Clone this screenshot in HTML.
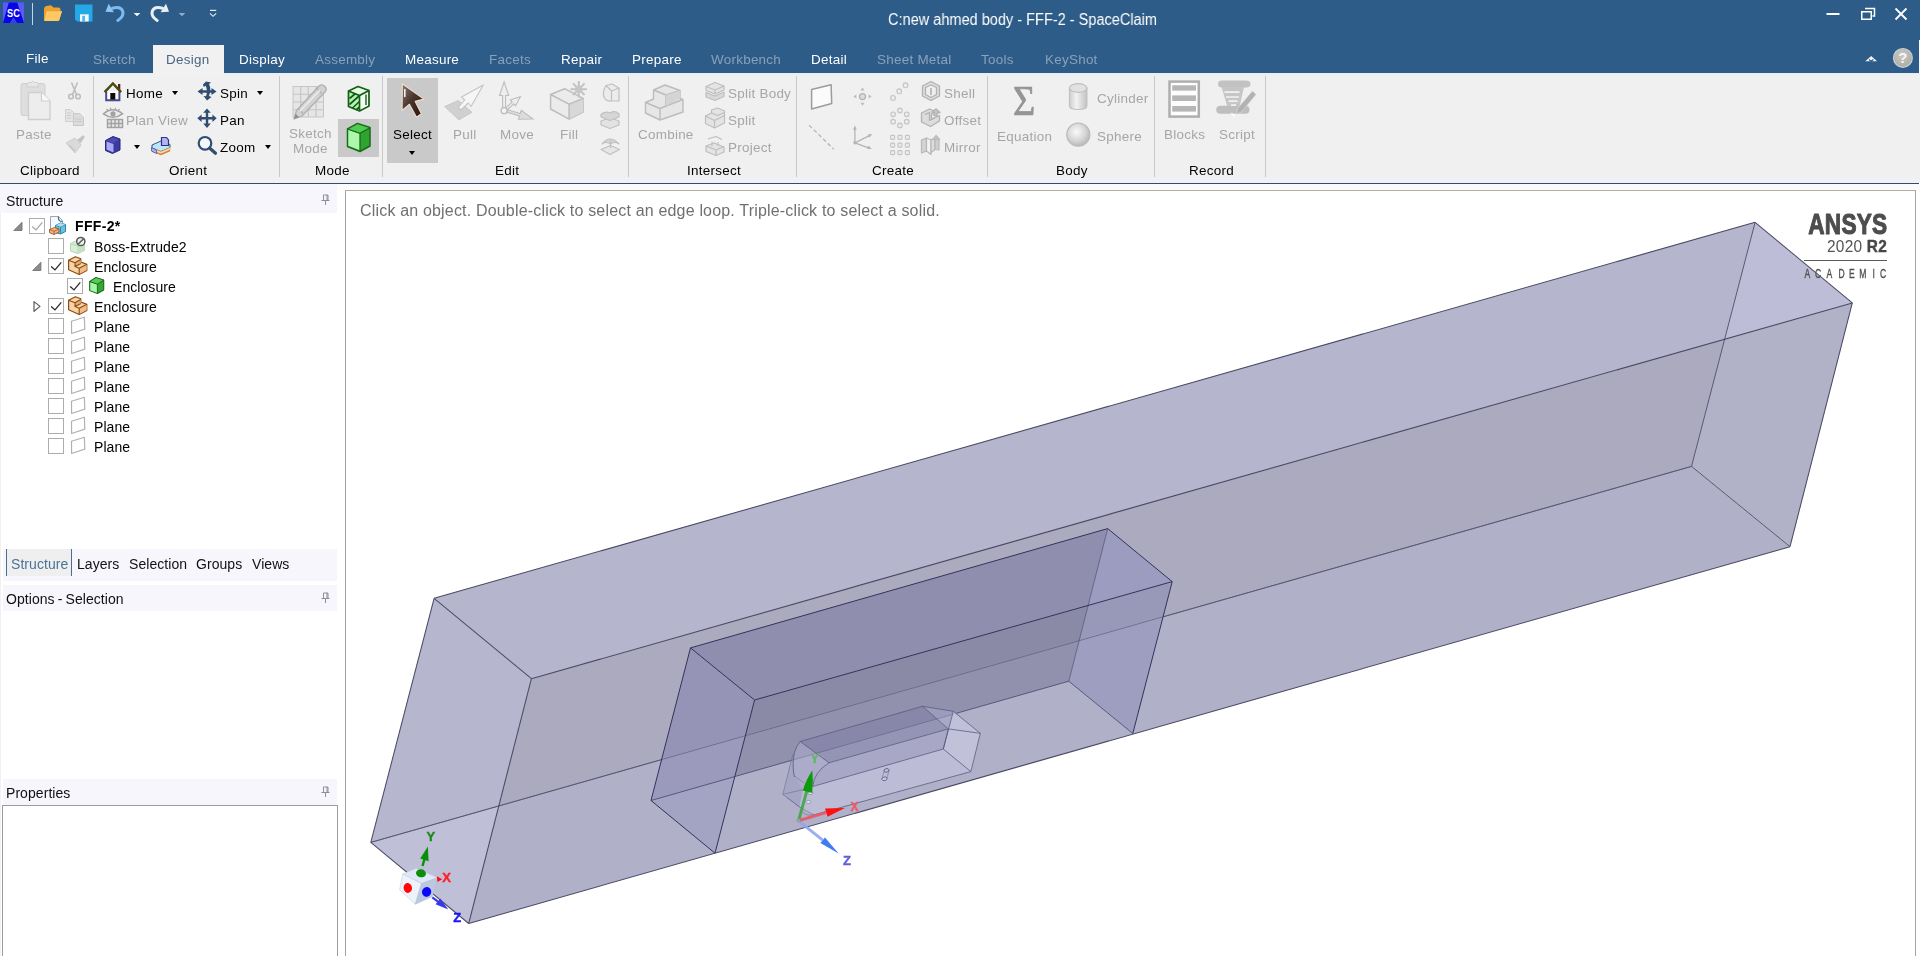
<!DOCTYPE html>
<html lang="en">
<head>
<meta charset="utf-8">
<title>C:new ahmed body - FFF-2 - SpaceClaim</title>
<style>
*{box-sizing:border-box;margin:0;padding:0}
html,body{width:1920px;height:956px;overflow:hidden;background:#fff}
body{position:relative;font-family:"Liberation Sans",Arial,sans-serif;font-size:13.45px;letter-spacing:0.26px;color:#000;-webkit-font-smoothing:antialiased}
.abs{position:absolute}
.rt,.gl,.tab{margin-top:1px}
.pt,.tr{font-size:14px;letter-spacing:0.06px}
.rt,.gl,.tab,.pt,.tr,#title{will-change:transform}
.t{position:absolute;white-space:nowrap;line-height:16px;height:16px}
#titlebar{position:absolute;left:0;top:0;width:1920px;height:73px;background:#2d5c88}
#title{letter-spacing:0;position:absolute;left:888px;top:8.5px;height:22px;line-height:22px;color:#fff;font-size:16px;white-space:nowrap;transform-origin:0 0;transform:scaleX(0.9085)}
.tab{position:absolute;top:51px;height:16px;line-height:16px;color:#fff;white-space:nowrap}
.tab.dis{color:#8ba1b9}
#tabsel{position:absolute;left:153px;top:45px;width:71px;height:29px;background:#f1f1f1}
#ribbon{position:absolute;left:0;top:73px;width:1920px;height:110px;background:#f0f0f0}
#ribtop{position:absolute;left:0;top:73px;width:1920px;height:3px;background:linear-gradient(#e4eef8,#f0f0f0)}
#ribbot{position:absolute;left:0;top:178px;width:1920px;height:5px;background:linear-gradient(#f0f0f0,#eef2fc)}
#ribline{position:absolute;left:0;top:183px;width:1919px;height:1px;background:#3d4a5e}
.sep{position:absolute;top:76px;width:1px;height:101px;background:#c9c9c9}
.gl{position:absolute;top:162px;height:16px;line-height:16px;white-space:nowrap;color:#000}
.rt{position:absolute;height:16px;line-height:16px;white-space:nowrap;color:#000}
.rt.d{color:#a6a6a6}
.hl{position:absolute;background:#c9c9c9}
.ic{position:absolute;overflow:visible}
.dd{position:absolute;width:0;height:0;border-left:3.5px solid transparent;border-right:3.5px solid transparent;border-top:4px solid #000}
#left{position:absolute;left:0;top:184px;width:345px;height:772px;background:#fff}
.ph{position:absolute;left:3px;width:334px;background:#f6f6fc}
.pt{position:absolute;left:6px;height:16px;line-height:16px;white-space:nowrap;color:#111}
.cb{position:absolute;width:16px;height:16px;border:1px solid #adadad;background:#fff}
.tr{position:absolute;height:16px;line-height:16px;white-space:nowrap;color:#000}
#view{position:absolute;left:345px;top:190px;width:1571px;height:766px;background:#fff;border-left:1px solid #a3a39c;border-top:1px solid #b1ad98;border-right:1px solid #a3a39c}
#hint{will-change:transform;position:absolute;left:359.600px;top:201px;height:20px;line-height:20px;font-size:16px;letter-spacing:0.178px;color:#707070;white-space:nowrap}
</style>
</head>
<body>
<div id="titlebar"></div>
<div class="abs" style="left:1919px;top:40px;width:1px;height:33px;background:#f4f8fc"></div>
<div id="title">C:new ahmed body - FFF-2 - SpaceClaim</div>
<!-- quick access toolbar -->
<svg class="ic" style="left:0;top:0" width="240" height="32" viewBox="0 0 240 32">
  <rect x="3" y="2.500" width="21" height="20.500" fill="#5a5af6"/>
  <path d="M8.800 2.500h8.400l6.800 20.500h-7l-3.500-5.500l-3.500 5.500h-7z" fill="#0606e6"/>
  <path d="M10.500 23l3-4.800l3 4.800z" fill="#3a3af0"/>
  <text x="6.900" y="17" font-family="Liberation Sans, sans-serif" font-weight="700" font-size="10.800" fill="#fff" textLength="13.200" lengthAdjust="spacingAndGlyphs">SC</text>
  <rect x="32" y="3" width="1" height="22" fill="#c5d3e3"/>
  <!-- folder -->
  <path d="M44 9q0-2.500 2.500-3l4.500-.8l2.500 2.300h5q2 0 2 2v2h-16.500z" fill="#f0a22e"/>
  <path d="M44 20v-10.500h13l1 1.500h4l-2.800 9q-.4 1-1.500 1h-12.200q-1.500 0-1.500-1z" fill="#e9a034"/>
  <path d="M46.500 11.200h15.500l-2.700 8.800q-.3 1-1.500 1h-13.500z" fill="#ffc862"/>
  <!-- save -->
  <path d="M75 4.500h17.500v17h-15.300l-2.200-2.200z" fill="#24a8e8"/>
  <rect x="80" y="14.300" width="8.700" height="7.200" fill="#f2f8fc"/>
  <rect x="82.300" y="15.800" width="2.600" height="5.700" fill="#49b4ea"/>
  <!-- undo -->
  <path d="M112.500 8.200q8.500-2.300 10.300 3.300q1.300 4.800-5 9" fill="none" stroke="#7dbaf2" stroke-width="3" stroke-linecap="round"/>
  <path d="M105.500 11.800l3.200-8l5.200 8.500z" fill="#8cc4f6"/>
  <path d="M133.700 13h6.600l-3.300 3.300z" fill="#fff"/>
  <!-- redo -->
  <path d="M162.500 8.200q-8.500-2.300-10.300 3.300q-1.300 4.800 5 9" fill="none" stroke="#e9eef4" stroke-width="3" stroke-linecap="round"/>
  <path d="M169 11.800l-3-8l-5.400 8.500z" fill="#e9eef4"/>
  <path d="M178.700 13h6.600l-3.300 3.300z" fill="#94aeca"/>
  <!-- customize -->
  <rect x="210" y="9.800" width="6.200" height="1.200" fill="#e4eaf1"/>
  <path d="M210 13.300l3.100 3l3.100-3" fill="none" stroke="#e4eaf1" stroke-width="1.100"/>
</svg>
<!-- window controls -->
<svg class="ic" style="left:1810px;top:0" width="110" height="73" viewBox="0 0 110 73">
  <rect x="16.500" y="13" width="13" height="2" fill="#fff"/>
  <path d="M55 8.500h9.500v7.500h-2" fill="none" stroke="#fff" stroke-width="1.500"/>
  <rect x="51.750" y="11.750" width="9.500" height="7.500" fill="#2d5c88" stroke="#fff" stroke-width="1.500"/>
  <path d="M85.500 8.500l11 11M96.500 8.500l-11 11" stroke="#fff" stroke-width="1.800" fill="none"/>
  <path d="M55.300 61.200l5.900-5.200l5.900 5.200z" fill="#f4f4f4"/>
  <path d="M59 59.500l2.200 1.700l2.200-1.700" fill="none" stroke="#2d5c88" stroke-width="1.200"/>
  <defs><radialGradient id="hg" cx=".45" cy=".35" r=".7"><stop offset="0" stop-color="#cfcbc4"/><stop offset=".6" stop-color="#b9b6b0"/><stop offset="1" stop-color="#a9a9a9"/></radialGradient></defs>
  <circle cx="92.900" cy="57.900" r="9.400" fill="url(#hg)" stroke="#c4cfda" stroke-width="1.200"/>
  <text x="92.900" y="63.200" font-family="Liberation Sans, sans-serif" font-weight="700" font-size="15" fill="#f6f6f6" text-anchor="middle">?</text>
</svg>
<!-- tabs -->
<div id="tabsel"></div>
<div class="tab" style="left:26px;top:50px">File</div>
<div class="tab dis" style="left:93px">Sketch</div>
<div class="tab" style="left:166px;color:#4a6685">Design</div>
<div class="tab" style="left:239px">Display</div>
<div class="tab dis" style="left:315px">Assembly</div>
<div class="tab" style="left:405px">Measure</div>
<div class="tab dis" style="left:489px">Facets</div>
<div class="tab" style="left:561px">Repair</div>
<div class="tab" style="left:632px">Prepare</div>
<div class="tab dis" style="left:711px">Workbench</div>
<div class="tab" style="left:811px">Detail</div>
<div class="tab dis" style="left:877px">Sheet Metal</div>
<div class="tab dis" style="left:981px">Tools</div>
<div class="tab dis" style="left:1045px">KeyShot</div>
<div id="ribbon"></div>
<div id="ribtop"></div>
<div id="tabsel2" class="abs" style="left:153px;top:72px;width:71px;height:4px;background:#f1f1f1"></div>
<div id="ribbot"></div>
<div id="ribline"></div>
<div class="sep" style="left:93px"></div>
<div class="sep" style="left:279px"></div>
<div class="sep" style="left:382px"></div>
<div class="sep" style="left:628px"></div>
<div class="sep" style="left:796px"></div>
<div class="sep" style="left:987px"></div>
<div class="sep" style="left:1154px"></div>
<div class="sep" style="left:1265px"></div>
<div class="hl" style="left:338px;top:119px;width:41px;height:38px"></div>
<div class="hl" style="left:387px;top:78px;width:51px;height:85px"></div>
<!-- group labels -->
<div class="gl" style="left:20px">Clipboard</div>
<div class="gl" style="left:169px">Orient</div>
<div class="gl" style="left:315px">Mode</div>
<div class="gl" style="left:495px">Edit</div>
<div class="gl" style="left:687px">Intersect</div>
<div class="gl" style="left:872px">Create</div>
<div class="gl" style="left:1056px">Body</div>
<div class="gl" style="left:1189px">Record</div>
<!-- texts -->
<div class="rt d" style="left:16px;top:126px">Paste</div>
<div class="rt" style="left:126px;top:85px">Home</div><div class="dd" style="left:172px;top:91px"></div>
<div class="rt d" style="left:126px;top:112px">Plan View</div>
<div class="dd" style="left:134px;top:145px"></div>
<div class="rt" style="left:220px;top:85px">Spin</div><div class="dd" style="left:257px;top:91px"></div>
<div class="rt" style="left:220px;top:112px">Pan</div>
<div class="rt" style="left:220px;top:139px">Zoom</div><div class="dd" style="left:265px;top:145px"></div>
<div class="rt d" style="left:289px;top:125px">Sketch</div>
<div class="rt d" style="left:293px;top:140px">Mode</div>
<div class="rt" style="left:393px;top:126px">Select</div><div class="dd" style="left:409px;top:151px"></div>
<div class="rt d" style="left:453px;top:126px">Pull</div>
<div class="rt d" style="left:500px;top:126px">Move</div>
<div class="rt d" style="left:560px;top:126px">Fill</div>
<div class="rt d" style="left:638px;top:126px">Combine</div>
<div class="rt d" style="left:728px;top:85px">Split Body</div>
<div class="rt d" style="left:728px;top:112px">Split</div>
<div class="rt d" style="left:728px;top:139px">Project</div>
<div class="rt d" style="left:944px;top:85px">Shell</div>
<div class="rt d" style="left:944px;top:112px">Offset</div>
<div class="rt d" style="left:944px;top:139px">Mirror</div>
<div class="rt d" style="left:997px;top:128px">Equation</div>
<div class="rt d" style="left:1097px;top:90px">Cylinder</div>
<div class="rt d" style="left:1097px;top:128px">Sphere</div>
<div class="rt d" style="left:1164px;top:126px">Blocks</div>
<div class="rt d" style="left:1219px;top:126px">Script</div>
<svg class="ic" style="left:0;top:73px" width="1920" height="110" viewBox="0 73 1920 110" font-family="Liberation Sans, sans-serif">
<defs>
<linearGradient id="gd" x1="0" y1="0" x2="1" y2="1"><stop offset="0" stop-color="#f4f4f4"/><stop offset="1" stop-color="#d2d2d2"/></linearGradient>
<linearGradient id="gsel" x1="0" y1="0" x2="1" y2="1"><stop offset="0" stop-color="#8a7a74"/><stop offset=".45" stop-color="#4a3630"/><stop offset="1" stop-color="#2a1008"/></linearGradient>
<radialGradient id="gsph" cx=".42" cy=".38" r=".65"><stop offset="0" stop-color="#fafafa"/><stop offset=".6" stop-color="#d6d6d6"/><stop offset="1" stop-color="#b4b4b4"/></radialGradient>
<linearGradient id="gcyl" x1="0" y1="0" x2="1" y2="0"><stop offset="0" stop-color="#cfcfcf"/><stop offset=".4" stop-color="#f2f2f2"/><stop offset="1" stop-color="#c2c2c2"/></linearGradient>
</defs>
<!-- ===== Clipboard ===== -->
<g id="i-paste">
<rect x="21" y="83.500" width="24" height="32" rx="2" fill="#dedede" stroke="#cfcfcf" stroke-width="1"/>
<path d="M27 84.500q0-2 2-2h2q1.500-2.500 3.500 0h2q2 0 2 2v2.500h-11.500z" fill="#e6e6e6" stroke="#cfcfcf" stroke-width="1"/>
<path d="M28.500 92.500h13l8.500 8.500v18.500h-21.500z" fill="#ededed" stroke="#cfcfcf" stroke-width="1.400"/>
<path d="M41.500 92.500v8.500h8.500" fill="#f8f8f8" stroke="#cfcfcf" stroke-width="1.200"/>
</g>
<g id="i-cut" fill="none" stroke="#bdbdbd" stroke-width="1.600">
<path d="M71.500 82.500l5 12M77.500 82.500l-5 12"/>
<circle cx="71" cy="96.500" r="2.300"/><circle cx="78" cy="96.500" r="2.300"/>
</g>
<g id="i-copy">
<path d="M65.500 109.500h5l3 3v9h-8z" fill="#e4e4e4" stroke="#cfcfcf"/>
<path d="M73.500 113.500h6l4 4v8h-10z" fill="#dcdcdc" stroke="#c8c8c8"/>
<path d="M75 119h7M75 121.500h7M67 113h4M67 115.500h4M67 118h4" stroke="#c4c4c4" stroke-width=".8"/>
</g>
<g id="i-brush">
<path d="M66 143l9-5l6 7l-6 8z" fill="#dadada" stroke="#cccccc"/>
<path d="M77 140l5.500-4.500q2.500-.5 2 2l-4 6z" fill="#c4c4c4"/>
<path d="M69 145l6 6" stroke="#c6c6c6" stroke-width="1.500"/>
</g>
<!-- ===== Orient ===== -->
<g id="i-home">
<rect x="106" y="91" width="13.500" height="9.300" fill="#fdfdfd"/>
<path d="M106.200 91.500v8.800h13.200v-8.800" fill="none" stroke="#4a4a96" stroke-width="2"/>
<rect x="110.300" y="93" width="5" height="6.600" fill="#0c0c0c"/>
<rect x="118" y="84" width="2.300" height="6.500" fill="#5a2410"/>
<path d="M104.600 92.200l8.300-8.700l8.200 8.700" fill="none" stroke="#4a4a10" stroke-width="2.500" stroke-linejoin="miter"/>
</g>
<g id="i-plan" fill="none" stroke="#a2a2a2">
<path d="M103.500 113.800q9.500-8 19 0q-9.500 7-19 0z" fill="#ececec" stroke-width="1.500"/>
<circle cx="113" cy="113.800" r="2.600" fill="#a2a2a2" stroke="none"/>
<path d="M106.500 109l1.500 1.500M110.300 107.800l.7 1.800M115.700 107.800l-.7 1.800M119.500 109l-1.500 1.500" stroke-width="1.100"/>
<rect x="107.500" y="119.500" width="15" height="8" fill="#e6e6e6" stroke-width="1.500"/>
<path d="M107.500 123.500h15M111.200 119.500v8M115 119.500v8M118.800 119.500v8" stroke-width="1.400"/>
</g>
<g id="i-cube">
<path d="M105.500 140.500l7.500-4l7 2.500v11l-7.500 3.500l-7-3z" fill="#3a3aa0" stroke="#24247c" stroke-width="1" stroke-linejoin="round"/>
<path d="M106.500 141.500l7 2.500v8.500l-7-3z" fill="#a9a8f2"/>
<path d="M106.500 140.800l6.500-3.300l6 2.200l-5.800 3.200z" fill="#4c4cb4"/>
</g>
<g id="i-stack">
<path d="M152 145l9-4l9 3.500v3l-9 4l-9-3.500z" fill="#bfe6f8" stroke="#2c5a78" stroke-width="1"/>
<path d="M152 148l9 3.500l9-4v3l-9 4l-9-3.500z" fill="#f3dca8" stroke="#c8a860" stroke-width=".6"/>
<path d="M152 151l9 3.500l9-4" fill="none" stroke="#e08040" stroke-width="1.400"/>
<path d="M161.500 137.500h5l2 2.500v5.500h-7z" fill="#b4b4f0" stroke="#303090" stroke-width="1.200"/>
<path d="M151.500 147.500l5 2.500v3.500l-5-2.500z" fill="#b0b0ee" stroke="#5050b0" stroke-width=".8"/>
</g>
<g id="i-spin" fill="#2f4e70">
<path d="M197.500 91.500l5-3.500v2.300h9v-2.300l5 3.500l-5 3.500v-2.300h-9v2.300z"/>
<path d="M203 84.500l3-3l5 1l-2 1.500q2.500 5 0 12l2.500 1l-4.500 3.500l-3.500-4.500l2.500.2q2-5.500-.3-10.500l-2 1.300z"/>
</g>
<g id="i-pan" fill="#2f4e70">
<path d="M207 108.500l3.800 4.300h-2.600v4.200h4.200v-2.600l4.300 3.800l-4.300 3.800v-2.600h-4.200v4.200h2.600l-3.800 4.300l-3.800-4.300h2.600v-4.200h-4.200v2.600l-4.300-3.800l4.300-3.800v2.600h4.200v-4.200h-2.600z"/>
</g>
<g id="i-zoom">
<circle cx="205" cy="143.300" r="6.300" fill="#f4f8fc" stroke="#2f4e70" stroke-width="2.200"/>
<path d="M209.800 148.200l5.700 5" stroke="#2f4e70" stroke-width="3.200" stroke-linecap="round"/>
</g>
<!-- ===== Mode ===== -->
<g id="i-sketch">
<rect x="293" y="86.500" width="30.500" height="30.500" fill="#e6e6e6" stroke="#c6c6c6"/>
<path d="M293 94.300h30.500M293 102h30.500M293 109.700h30.500M300.700 86.500v30.500M308.300 86.500v30.500M316 86.500v30.500" stroke="#c4c4c4" stroke-width="1.100"/>
<path d="M294 119l2.500-8.500l22.500-24.500q3-2.500 6 .5q2.500 3 0 5.500l-23 24z" fill="#d2d2d2" stroke="#b0b0b0" stroke-width="1.300" stroke-linejoin="round"/>
<path d="M294 119l1.600-5.300l3.600 3.600z" fill="#909090"/>
<path d="M298.500 109l4.500 4.500M317 88.500l5 5" stroke="#b0b0b0" stroke-width="1.100"/>
<path d="M299.500 111.500l20.500-21.500" stroke="#ececec" stroke-width="1.600"/>
</g>
<g id="i-wire">
<path d="M348.500 91l9.500-4.500l11 4v15.500l-9.500 5l-11-4.500z" fill="#b6f5b6" stroke="#165c16" stroke-width="1.700" stroke-linejoin="round"/>
<path d="M350 91.500l8-3.800l9 3.200l-7.700 3.600z" fill="#e4fbe4"/>
<path d="M360.500 95.500l7.500-3.500v13.500l-7.500 4z" fill="#f2fdf2"/>
<path d="M348.500 91l11 4.500l9.500-5M359.500 95.500v15.500" fill="none" stroke="#165c16" stroke-width="1.600"/>
<path d="M349.500 98.500l6-5M349.500 104.500l9.500-8.500M352.500 108l7-6.500M356.500 109.500l3-2.500" stroke="#165c16" stroke-width="1.700"/>
<path d="M366 94.500v10.500" stroke="#165c16" stroke-width="1.400"/>
</g>
<g id="i-solid">
<path d="M347.500 129l10-5.500l12.500 4v18.500l-10 5.500l-12.500-5z" fill="#2fa42f" stroke="#1a6a1a" stroke-width="1.500" stroke-linejoin="round"/>
<path d="M348.300 129.300l9.300-5l11.500 3.800l-9.300 5.200z" fill="#4fcb4f"/>
<path d="M348.300 129.800l11.500 4v16.500l-11.500-4.500z" fill="#adf8ad"/>
<path d="M347.500 129l12.500 4.300l10-5.600M360 133.300v18" fill="none" stroke="#1a6a1a" stroke-width="1.200"/>
</g>
<!-- ===== Edit ===== -->
<g id="i-select">
<path d="M402.300 83.800l21.500 15.300l-8.600 2.300l6.200 12.400l-5 3.300l-7-12.900l-7.300 6.300z" fill="url(#gsel)" stroke="#f4dcc8" stroke-width="1.100" stroke-linejoin="round"/>
<path d="M404.800 89.500v7" stroke="#fff" stroke-width="1.600" stroke-linecap="round" opacity=".9"/>
</g>
<g id="i-pull">
<path d="M444.700 106.600l13.700-6.100l13.600 11.800l-13.100 7.500z" fill="#d0d0d0" stroke="#c6c6c6"/>
<path d="M483.300 84.900l-12.300 21.600l-2.700-3.500l-7.300 7l-2.800-2.500l6.500-7.500l-3.200-2.900z" fill="#f6f6f6" stroke="#c4c4c4" stroke-width="1.100" stroke-linejoin="round"/>
</g>
<g id="i-move" fill="#eeeeee" stroke="#bdbdbd" stroke-width="1.100">
<path d="M504.100 82l4.600 13.500h-3.100v12h-3v-12h-3.100z"/>
<path d="M520.300 96.800l-4.700 9l-1.800-2l-6.800 6.200l-1.500-1.800l6.700-6.200l-1.900-2z"/>
<path d="M533 119l-14.500.2l1-3.200l-12.500-3.700l.8-2.500l12.500 3.700l1-3.100z" fill="#dcdcdc"/>
<circle cx="504.100" cy="110.700" r="3" fill="#f4f4f4" stroke-width="1.300"/>
</g>
<g id="i-fill">
<path d="M550.600 94.500l14.100-5.800l18.400 9.700v13.600l-14 7.100l-18.500-10.100z" fill="#ebebeb" stroke="#bdbdbd" stroke-width="1.500" stroke-linejoin="round"/>
<path d="M569.100 104.100l14-5.700v13.600l-14 7.100z" fill="#d8d8d8"/>
<path d="M550.600 94.500l18.500 9.600l14-5.700M569.100 104.100v15" fill="none" stroke="#bdbdbd" stroke-width="1.500"/>
<g stroke="#c2c2c2" stroke-width="2"><path d="M578.800 81v16.500M570.500 89.200h16.500M573 83.400l11.600 11.600M584.600 83.400l-11.600 11.600"/></g>
<circle cx="578.800" cy="89.200" r="3.800" fill="#c6c6c6"/>
</g>
<g id="i-e1" fill="#ececec" stroke="#c0c0c0" stroke-width="1.200" stroke-linejoin="round">
<path d="M606 85.500l6-1.500l7 4v13h-7.500q-5 .5-7-3q-3-5 1.500-12.500z"/>
<path d="M606 85.500l5.500 5.500l7.500-3M611.500 91v10" fill="none"/>
</g>
<g id="i-e2" fill="#e2e2e2" stroke="#c0c0c0" stroke-width="1.200" stroke-linejoin="round">
<path d="M601 121l9-3.500l9 3.500v4l-9 3.500l-9-3.500z"/>
<path d="M601 114.500q4-4 9-1.500q5-3 9 1v3l-9 3.500l-9-3.500z" fill="#d6d6d6"/>
</g>
<g id="i-e3" fill="#e6e6e6" stroke="#c0c0c0" stroke-width="1.200" stroke-linejoin="round">
<path d="M601 149.500l9.500-4l9 4l-9.500 5z"/>
<path d="M602 144q8-10 17 0q-4-3-8.500 0q-4.500-3-8.500 0z" fill="#d4d4d4"/>
<path d="M610.500 141v7" fill="none"/>
</g>
<!-- ===== Intersect ===== -->
<g id="i-combine" stroke="#bcbcbc" stroke-width="1.400" stroke-linejoin="round">
<path d="M645.500 102.500l8-3.500v-9l11.500-5l15 5.500v8l3 1v12.500l-23 8l-14.500-7z" fill="#e6e6e6"/>
<path d="M653.500 90l12.500 5l14-4.500M666 95v11M645.500 102.500l14.500 6l6-2.500M660 108.500v11M660 108.500l6-2.500l17-6.500" fill="none"/>
<path d="M666 95l14-4.500v8l-14 7.500z" fill="#d4d4d4" stroke="none"/>
</g>
<g id="i-splitbody" fill="#e4e4e4" stroke="#bebebe" stroke-width="1.200" stroke-linejoin="round">
<path d="M706 86.500l9-4l9 3.500v4l-9 4l-9-3.500z"/>
<path d="M706 92.500l9 3.500l9-4v4.500l-9 4l-9-3.500z" fill="#d8d8d8"/>
<path d="M706 86.500l9 3.500l9-4M715 90v4" fill="none"/>
</g>
<g id="i-split" fill="#e4e4e4" stroke="#bebebe" stroke-width="1.200" stroke-linejoin="round">
<path d="M705.500 116l6-3v-3l6-2l7 3v12l-10 5l-9-4.500z"/>
<path d="M705.500 116l9 4.500l10-5M714.500 120.500v7.500M711.500 113l6 2.500l7-3" fill="none"/>
</g>
<g id="i-project" fill="#e4e4e4" stroke="#bebebe" stroke-width="1.200" stroke-linejoin="round">
<path d="M706 146l8-3l10 4v5l-8 3.500l-10-4z"/>
<path d="M706 146l10 4l8-3.500M716 150v5.500" fill="none"/>
<path d="M708 139l8-2.500l6 3" fill="none"/>
<path d="M712 141.500v5M718 142v4" fill="none" stroke-width="1"/>
</g>
<!-- ===== Create ===== -->
<path d="M811.600 89.500l19.500-4.700l.6 18.800l-20.100 5.300z" fill="#fbfbfb" stroke="#9c9c9c" stroke-width="1.500" stroke-linejoin="round"/>
<g id="i-point" fill="#bcbcbc">
<circle cx="862.500" cy="96.600" r="3" fill="#dcdcdc" stroke="#b4b4b4" stroke-width="1.300"/>
<path d="M862.500 87.500l2 3h-4zM862.500 105.700l2-3h-4zM853.400 96.600l3-2v4zM871.600 96.600l-3-2v4z"/>
</g>
<path d="M809.100 125.200l24.500 23.900" stroke="#bdbdbd" stroke-width="1.500" stroke-dasharray="4 2.500" fill="none"/>
<g id="i-axis" stroke="#b4b4b4" stroke-width="1.300" fill="#b4b4b4">
<path d="M854.900 142.800v-14M854.900 142.800l14-7M854.900 142.800l13.500 5" fill="none"/>
<path d="M854.900 125.200l1.800 4.500h-3.600zM872.500 134l-3.200 3.600l-1.600-3.200zM871.900 149.100l-4.800-.2l1.200-3.400z" stroke="none"/>
<circle cx="854.900" cy="142.800" r="1.600" stroke="none"/>
</g>
<g id="i-pat" fill="#ececec" stroke="#c4c4c4" stroke-width="1.100">
<circle cx="893" cy="97.900" r="2.400"/><circle cx="899.200" cy="91.300" r="2.400"/><circle cx="905.500" cy="85.300" r="2.400"/>
<circle cx="899.900" cy="110.400" r="2.300"/><circle cx="906.700" cy="114.300" r="2.300"/><circle cx="906.700" cy="121.700" r="2.300"/><circle cx="899.900" cy="125.400" r="2.300"/><circle cx="893.100" cy="121.700" r="2.300"/><circle cx="893.100" cy="114.300" r="2.300"/>
<rect x="890.600" y="135.400" width="4" height="4" rx=".8"/><rect x="897.900" y="135.400" width="4" height="4" rx=".8"/><rect x="905.400" y="135.400" width="4" height="4" rx=".8"/>
<rect x="890.600" y="143.100" width="4" height="4" rx=".8"/><rect x="897.900" y="143.100" width="4" height="4" rx=".8"/><rect x="905.400" y="143.100" width="4" height="4" rx=".8"/>
<rect x="890.600" y="150.600" width="4" height="4" rx=".8"/><rect x="897.900" y="150.600" width="4" height="4" rx=".8"/><rect x="905.400" y="150.600" width="4" height="4" rx=".8"/>
</g>
<g id="i-shell" fill="#dcdcdc" stroke="#b2b2b2" stroke-width="1.300" stroke-linejoin="round">
<path d="M922.500 86l8.500-4.500l8.500 4.500v10l-8.500 4.500l-8.500-4.500z"/>
<path d="M925.500 87.500l5.500-2.500l5.500 2.500v7l-5.500 3l-5.500-3z" fill="#efefef"/>
<path d="M931 88v7" fill="none" stroke-width="1.600"/>
</g>
<g id="i-offset" fill="#dcdcdc" stroke="#b2b2b2" stroke-width="1.300" stroke-linejoin="round">
<path d="M921.500 113l8-4l6 2.500l-4 2.500v5l8-3.500v5.500l-9 5.500l-9-4.500z"/>
<path d="M932 112l4-3l4 3.500l-2.500 .5l-1 3.500l-3-1.500l1-2.500z" fill="#c6c6c6"/>
<path d="M925 114.500l4.500-2v8l5-2.500" fill="none"/>
</g>
<g id="i-mirror" fill="#e4e4e4" stroke="#b8b8b8" stroke-width="1.200" stroke-linejoin="round">
<path d="M921.500 140l5-2v13l-5 2z" fill="#d4d4d4"/>
<path d="M926.500 138l4.500 2v14.500l-4.500-3.500z" fill="#f2f2f2"/>
<path d="M931 140l4-2.500v12l-4 3z" fill="#dcdcdc"/>
<path d="M935 137.500l4 2.500v10l-4-.5z" fill="#d0d0d0"/>
<path d="M933 139.500l3-4l3.500 4z" fill="#c6c6c6"/>
</g>
<!-- ===== Body ===== -->
<text x="1024.300" y="115.300" font-family="Liberation Serif, serif" font-size="42" fill="#949494" stroke="#949494" stroke-width=".7" text-anchor="middle" textLength="22.500" lengthAdjust="spacingAndGlyphs">&#931;</text>
<g id="i-cyl">
<path d="M1069.500 88v17.500q0 4 8.700 4q8.700 0 8.700-4v-17.500z" fill="url(#gcyl)" stroke="#c0c0c0" stroke-width="1.200"/>
<ellipse cx="1078.200" cy="88" rx="8.700" ry="4.300" fill="#e2e2e2" stroke="#c0c0c0" stroke-width="1.200"/>
</g>
<circle cx="1078.300" cy="134.700" r="11.500" fill="url(#gsph)" stroke="#bcbcbc" stroke-width="1.300"/>
<!-- ===== Record ===== -->
<g id="i-blocks">
<rect x="1169.500" y="81.600" width="29.300" height="35" fill="#fdfdfd" stroke="#aeaeae" stroke-width="2.500"/>
<rect x="1172.200" y="85.300" width="23.800" height="5.300" fill="#b6b6b6"/>
<rect x="1172.200" y="95.400" width="23.800" height="5.600" fill="#b6b6b6"/>
<rect x="1172.200" y="106" width="23.800" height="5.600" fill="#b6b6b6"/>
</g>
<g id="i-script">
<path d="M1222 80.400h24q4.500 0 4.500 3.600q0 3.500-4.500 3.500h-24q-4 0-4-3.500q0-3.600 4-3.600z" fill="#c2c2c2"/>
<path d="M1221.500 87h22.500l-4.500 20h-12z" fill="#c6c6c6"/>
<path d="M1220.500 105.800h25q4 0 4 4t-4 4h-25q-4.300 0-4.300-4t4.300-4z" fill="#bebebe"/>
<path d="M1224.500 92.200h15M1226 97h13M1228.500 101.200h9M1231 105.200h5" stroke="#f2f2f2" stroke-width="1.700"/>
<path d="M1252.500 91l3.500 3.500l-14.500 17.500l-5 2l1-5.500z" fill="#b2b2b2" stroke="#d8d8d8" stroke-width=".7"/>
<path d="M1230.500 112.500l3 4.500l2.500-2z" fill="#fafafa"/>
</g>
</svg>
<div id="left"></div>
<div id="leftedge" class="abs" style="left:0;top:184px;width:1px;height:772px;background:#f1f1f1"></div>
<div class="abs" style="left:0;top:184px;width:1920px;height:6px;background:#fbfbfe"></div>
<div class="ph" style="left:0;width:337px;top:184px;height:29px"></div>
<div class="pt" style="top:193px">Structure</div>
<div class="ph" style="top:549px;height:32px"></div>
<div class="abs" style="left:6px;top:549px;width:66px;height:27px;background:#efefef;border-left:1px solid #4a6d98;border-right:1px solid #4a6d98"></div>
<div class="pt" style="left:11px;top:556px;color:#4a7397">Structure</div>
<div class="pt" style="left:77px;top:556px">Layers</div>
<div class="pt" style="left:129px;top:556px">Selection</div>
<div class="pt" style="left:196px;top:556px">Groups</div>
<div class="pt" style="left:252px;top:556px">Views</div>
<div class="ph" style="top:585px;height:26px"></div>
<div class="pt" style="top:591px;word-spacing:-0.9px">Options - Selection</div>
<div class="ph" style="top:779px;height:26px"></div>
<div class="pt" style="top:785px">Properties</div>
<div class="abs" style="left:2px;top:805px;width:336px;height:160px;border:1px solid #9c9c9c;background:#fff"></div>
<!-- pins -->
<svg class="ic" style="left:321px;top:194px" width="10" height="12" viewBox="0 0 10 12"><path d="M2.500 1h4.500v5.500M2.500 1v5.500M0.500 6.500h8M4.500 6.500v4.500M6 1v5.500" fill="none" stroke="#8e8e96" stroke-width="1"/></svg>
<svg class="ic" style="left:321px;top:592px" width="10" height="12" viewBox="0 0 10 12"><path d="M2.500 1h4.500v5.500M2.500 1v5.500M0.500 6.500h8M4.500 6.500v4.500M6 1v5.500" fill="none" stroke="#8e8e96" stroke-width="1"/></svg>
<svg class="ic" style="left:321px;top:786px" width="10" height="12" viewBox="0 0 10 12"><path d="M2.500 1h4.500v5.500M2.500 1v5.500M0.500 6.500h8M4.500 6.500v4.500M6 1v5.500" fill="none" stroke="#8e8e96" stroke-width="1"/></svg>
<!-- tree -->
<div class="cb" style="left:29px;top:218px"></div>
<div class="cb" style="left:48px;top:238px"></div>
<div class="cb" style="left:48px;top:258px"></div>
<div class="cb" style="left:67px;top:278px"></div>
<div class="cb" style="left:48px;top:298px"></div>
<div class="cb" style="left:48px;top:318px"></div>
<div class="cb" style="left:48px;top:338px"></div>
<div class="cb" style="left:48px;top:358px"></div>
<div class="cb" style="left:48px;top:378px"></div>
<div class="cb" style="left:48px;top:398px"></div>
<div class="cb" style="left:48px;top:418px"></div>
<div class="cb" style="left:48px;top:438px"></div>
<div class="tr" style="left:75px;top:218px;font-weight:700;letter-spacing:0.35px">FFF-2*</div>
<div class="tr" style="left:94px;top:239px">Boss-Extrude2</div>
<div class="tr" style="left:94px;top:259px">Enclosure</div>
<div class="tr" style="left:113px;top:279px">Enclosure</div>
<div class="tr" style="left:94px;top:299px">Enclosure</div>
<div class="tr" style="left:94px;top:319px">Plane</div>
<div class="tr" style="left:94px;top:339px">Plane</div>
<div class="tr" style="left:94px;top:359px">Plane</div>
<div class="tr" style="left:94px;top:379px">Plane</div>
<div class="tr" style="left:94px;top:399px">Plane</div>
<div class="tr" style="left:94px;top:419px">Plane</div>
<div class="tr" style="left:94px;top:439px">Plane</div>
<svg class="ic" style="left:0;top:212px" width="120" height="250" viewBox="0 212 120 250">
<path d="M13.800 230.500h8.200v-8.200z" fill="#8c8c8c" stroke="#6a6a6a" stroke-width=".8" stroke-linejoin="round"/>
<path d="M32.700 270.500h8.200v-8.200z" fill="#8c8c8c" stroke="#6a6a6a" stroke-width=".8" stroke-linejoin="round"/>
<path d="M34 301.600l6 4.800l-6 4.900z" fill="#fff" stroke="#5a5a5a" stroke-width="1.200" stroke-linejoin="round"/>
<path d="M32.2 226.4l3.800 3.500l6.300-7.500" fill="none" stroke="#a6a6a6" stroke-width="1.300"/>
<path d="M51.2 266.4l3.800 3.500l6.300-7.500" fill="none" stroke="#2a2a2a" stroke-width="1.300"/>
<path d="M70.2 286.4l3.800 3.500l6.300-7.500" fill="none" stroke="#2a2a2a" stroke-width="1.300"/>
<path d="M51.2 306.4l3.800 3.500l6.300-7.500" fill="none" stroke="#2a2a2a" stroke-width="1.300"/>
<g>
<path d="M50.500 216.500h8l4 4v9h-12z" fill="#f6f8fb" stroke="#9aa6b4" stroke-width="1"/>
<path d="M58.500 216.500v2.500q.5 2.500 4 2.500" fill="none" stroke="#3a6a9a" stroke-width="1.200"/>
<path d="M55.500 225.500l5-2.500l5 1.500v7l-5 2.500l-5-1.500z" fill="#6cc0dc" stroke="#2a84a8" stroke-width="1" stroke-linejoin="round"/>
<path d="M55.500 225.500l5 1.500l5-2.500M60.500 227v6.500" fill="none" stroke="#2a84a8" stroke-width=".9"/>
<path d="M56 225.300l4.700-2.200l4.500 1.400l-4.700 2.200z" fill="#a8e0f0"/>
<path d="M49.500 229.500l5-2l4.500 1.500v3l-5 2.500l-4.500-1.800z" fill="#f3b684" stroke="#a0581c" stroke-width=".9" stroke-linejoin="round"/>
<path d="M49.500 229.500l4.500 1.800l5-2.300M54 231.300v3.200" fill="none" stroke="#a0581c" stroke-width=".8"/>
</g>
<g>
<path d="M70.500 243.500l6.500-3l7.500 2.500v7.500l-6.500 3l-7.500-2.500z" fill="#d6efd6" stroke="#b4d8b4" stroke-width="1" stroke-linejoin="round"/>
<path d="M70.500 243.500l7.500 2.500l6.500-3M78 246v7.500" fill="none" stroke="#b4d8b4" stroke-width="1"/>
<path d="M78 246l6.500-3v7.500l-6.500 3z" fill="#c2e2c2"/>
<circle cx="80.800" cy="241.500" r="4.100" fill="#f2f2f2" stroke="#5a5a5a" stroke-width="1.500"/>
<path d="M78 244.300l5.600-5.600" stroke="#5a5a5a" stroke-width="1.500"/>
</g>
<g transform="translate(0 0)">
<path d="M68.600 260.300l6.800-3.600l5.400 2v3.400l6 2.200v6.200l-7.600 4l-10.600-4.800z" fill="#f7d3a6" stroke="#8c4a12" stroke-width="1.200" stroke-linejoin="round"/>
<path d="M75 262.800l5.800-3.200v3l-5.800 3.400z" fill="#e8b078"/>
<path d="M79.200 268l7.400-3.600v5.600l-7.400 4z" fill="#eebd8a"/>
<path d="M68.600 260.300l6.400 2.500v3.800l4.200 1.600v6.300M75 262.800l5.800-3.200M79.200 268.200l7.600-3.900M75 266.600l5.800-3.200" fill="none" stroke="#8c4a12" stroke-width="1.100" stroke-linejoin="round"/>
</g>
<g transform="translate(0 40)">
<path d="M68.600 260.300l6.800-3.600l5.400 2v3.400l6 2.200v6.200l-7.600 4l-10.600-4.800z" fill="#f7d3a6" stroke="#8c4a12" stroke-width="1.200" stroke-linejoin="round"/>
<path d="M75 262.800l5.800-3.200v3l-5.800 3.400z" fill="#e8b078"/>
<path d="M79.200 268l7.400-3.600v5.600l-7.400 4z" fill="#eebd8a"/>
<path d="M68.600 260.300l6.400 2.500v3.800l4.200 1.600v6.300M75 262.800l5.800-3.200M79.200 268.200l7.600-3.900M75 266.600l5.800-3.200" fill="none" stroke="#8c4a12" stroke-width="1.100" stroke-linejoin="round"/>
</g>
<g>
<path d="M89.700 281.500l6.300-4l7.700 2.500v10l-6.300 3.500l-7.700-3z" fill="#34a834" stroke="#1c6c1c" stroke-width="1.100" stroke-linejoin="round"/>
<path d="M90.300 281.700l5.800-3.600l7 2.300l-5.800 3.600z" fill="#56cc56"/>
<path d="M90.300 282.200l7 2.300v8.500l-7-2.700z" fill="#a8f4a8"/>
<path d="M89.700 281.500l7.700 2.700l6.300-4M97.400 284.200v9.300" fill="none" stroke="#1c6c1c" stroke-width="1"/>
</g>
<path d="M71.500 321.2l12.900-4l.4 11.900l-13.200 4.400z" fill="#fff" stroke="#b2b2b2" stroke-width="1.200" stroke-linejoin="round"/>
<path d="M71.500 341.2l12.900-4l.4 11.900l-13.200 4.400z" fill="#fff" stroke="#b2b2b2" stroke-width="1.200" stroke-linejoin="round"/>
<path d="M71.500 361.2l12.900-4l.4 11.900l-13.200 4.400z" fill="#fff" stroke="#b2b2b2" stroke-width="1.200" stroke-linejoin="round"/>
<path d="M71.500 381.2l12.900-4l.4 11.900l-13.200 4.400z" fill="#fff" stroke="#b2b2b2" stroke-width="1.200" stroke-linejoin="round"/>
<path d="M71.500 401.2l12.900-4l.4 11.900l-13.200 4.400z" fill="#fff" stroke="#b2b2b2" stroke-width="1.200" stroke-linejoin="round"/>
<path d="M71.500 421.2l12.900-4l.4 11.900l-13.200 4.400z" fill="#fff" stroke="#b2b2b2" stroke-width="1.200" stroke-linejoin="round"/>
<path d="M71.500 441.2l12.900-4l.4 11.900l-13.200 4.400z" fill="#fff" stroke="#b2b2b2" stroke-width="1.200" stroke-linejoin="round"/>
</svg>
<div id="view"></div>
<div id="hint">Click an object. Double-click to select an edge loop. Triple-click to select a solid.</div>
<svg class="ic" style="left:346px;top:191px;will-change:transform" width="1569" height="765" viewBox="346 191 1569 765" font-family="Liberation Sans, sans-serif">
<g shape-rendering="geometricPrecision">
<polygon points="434.1,598.3 1755.1,222.3 1724.6,339.2 531.4,678.7" fill="#b5b5cd" />
<polygon points="1755.1,222.3 1852.3,302.9 1724.6,339.2" fill="#bdbdd7" />
<polygon points="434.1,598.3 531.4,678.7 498.8,806.0 370.8,842.4" fill="#b6b6cf" />
<polygon points="370.8,842.4 498.8,806.0 468.7,923.5" fill="#bfbfd7" />
<polygon points="531.4,678.7 1724.6,339.2 1691.5,466.4 498.8,806.0" fill="#abaabe" />
<polygon points="1724.6,339.2 1852.3,302.9 1790.0,546.7 1691.5,466.4" fill="#b1b1c7" />
<polygon points="498.8,806.0 1691.5,466.4 1790.0,546.7 468.7,923.5" fill="#b0b0c8" />
<line x1="370.8" y1="842.4" x2="1691.5" y2="466.4" stroke="#565672" stroke-width="1" />
<line x1="1755.1" y1="222.3" x2="1691.5" y2="466.4" stroke="#565672" stroke-width="1" />
<line x1="1691.5" y1="466.4" x2="1790.0" y2="546.7" stroke="#565672" stroke-width="1" />
<polygon points="690.5,647.9 1107.7,528.6 1088.1,605.4 754.6,700.0" fill="#8f8eaf" />
<polygon points="1107.7,528.6 1172.2,581.6 1088.1,605.4" fill="#9c9cc0" />
<polygon points="690.5,647.9 754.6,700.0 745.4,735.8 661.6,759.6" fill="#9594b6" />
<polygon points="745.4,735.8 734.8,776.6 651.0,800.5 661.6,759.6" fill="#9b9abd" />
<polygon points="651.0,800.5 734.8,776.6 715.0,853.2" fill="#a3a3c4" />
<polygon points="754.6,700.0 1088.1,605.4 1079.1,640.7 745.4,735.8" fill="#8b8aa6" />
<polygon points="1079.1,640.7 1068.8,681.2 734.8,776.6 745.4,735.8" fill="#9190ad" />
<polygon points="1088.1,605.4 1172.2,581.6 1163.1,616.8 1079.1,640.7" fill="#9898b8" />
<polygon points="1163.1,616.8 1132.8,733.5 1068.8,681.2 1079.1,640.7" fill="#9e9ec0" />
<polygon points="734.8,776.6 1068.8,681.2 1132.8,733.5 715.0,853.2" fill="#b0b0c9" />
<line x1="370.8" y1="842.4" x2="1691.5" y2="466.4" stroke="#55557a" stroke-width="1" opacity="0.5"/>
<line x1="651.0" y1="800.5" x2="1068.8" y2="681.2" stroke="#44446c" stroke-width="1" opacity="0.8"/>
<line x1="1068.8" y1="681.2" x2="1132.8" y2="733.5" stroke="#44446c" stroke-width="1" opacity="0.8"/>
<line x1="1107.7" y1="528.6" x2="1068.8" y2="681.2" stroke="#44446c" stroke-width="1" opacity="0.6"/>
<path d="M800.2,741.5 L922.5,706.3 L948.3,728.9 L829,762.8 Z" fill="#8282a8" fill-opacity="0.6"/>
<path d="M922.5,706.3 L953.3,711.3 L980.3,733.3 L948.3,728.9 Z" fill="#a4a4c6" fill-opacity="0.6"/>
<path d="M953.3,711.3 L980.3,733.3 L970.9,771.6 L943.3,749 Z" fill="#c6c6df" fill-opacity="0.8"/>
<path d="M829,762.8 L948.3,728.9 L943.3,749 L812.7,786.5 Q814,772 829,762.8 Z" fill="#a4a4c4" fill-opacity="0.6"/>
<path d="M812.7,786.5 L943.3,749 L970.9,771.6 L813.9,814.9 L799.3,806.9 L803,790 Z" fill="#c0c0da" fill-opacity="0.75"/>
<path d="M800.2,741.5 Q792.5,750 793,768 L794.5,776 L803,790 L810,793 Q812,775 829,762.8 Z" fill="#aaaacb" fill-opacity="0.6"/>
<path d="M793,752 L782.8,794.4 L799.3,806.9 L803,790 L794.5,776 Z" fill="#9c9cc0" fill-opacity="0.55"/>
<path d="M800.2,741.5 L922.5,706.3 L953.3,711.3 L980.3,733.3 L970.9,771.6 L813.9,814.9 M922.5,706.3 L948.3,728.9 L829,762.8 L800.2,741.5 M948.3,728.9 L980.3,733.3 M948.3,728.9 L943.3,749 L953.3,711.3 M943.3,749 L970.9,771.6 M943.3,749 L812.7,786.5 M829,762.8 Q814,772 812.7,786.5 M800.2,741.5 Q792,751 793.2,768 Q793.6,774 794.5,777" stroke="#585880" stroke-width="0.9" fill="none" opacity="0.85"/>
<path d="M793,754 L782.8,794.4 L799.3,806.9 L813.9,814.9 M782.8,794.4 L802.9,789.6 M794.5,776 L804,783 M787,797.5 L802.5,809 M803,812 Q805.5,816.5 814,814.5" stroke="#585880" stroke-width="0.8" fill="none" opacity="0.55"/>
<path d="M884,771 L882,779.3 M889,770 L887,778.3" stroke="#585880" stroke-width="0.8" fill="none" opacity="0.55"/>
<ellipse cx="886.5" cy="770.4" rx="2.6" ry="1.8" transform="rotate(-15 886.5 770.4)" stroke="#585880" stroke-width="0.9" fill="none" opacity="0.85"/>
<ellipse cx="884.5" cy="778.8" rx="2.6" ry="1.8" transform="rotate(-15 884.5 778.8)" stroke="#585880" stroke-width="0.9" fill="#cfcfe4" opacity="0.85"/>
<ellipse cx="810.6" cy="793" rx="2.4" ry="1.6" transform="rotate(-15 810.6 793)" stroke="#8a8aa8" stroke-width="0.8" fill="#e6e6f2" opacity="0.9"/>
<ellipse cx="808.4" cy="802" rx="2.4" ry="1.6" transform="rotate(-15 808.4 802)" stroke="#8a8aa8" stroke-width="0.8" fill="#e6e6f2" opacity="0.9"/>
<line x1="690.5" y1="647.9" x2="1107.7" y2="528.6" stroke="#33335a" stroke-width="1" />
<line x1="1107.7" y1="528.6" x2="1172.2" y2="581.6" stroke="#33335a" stroke-width="1" />
<line x1="1172.2" y1="581.6" x2="754.6" y2="700.0" stroke="#33335a" stroke-width="1" />
<line x1="754.6" y1="700.0" x2="690.5" y2="647.9" stroke="#33335a" stroke-width="1" />
<line x1="690.5" y1="647.9" x2="651.0" y2="800.5" stroke="#33335a" stroke-width="1" />
<line x1="651.0" y1="800.5" x2="715.0" y2="853.2" stroke="#33335a" stroke-width="1" />
<line x1="754.6" y1="700.0" x2="715.0" y2="853.2" stroke="#33335a" stroke-width="1" />
<line x1="1172.2" y1="581.6" x2="1132.8" y2="733.5" stroke="#33335a" stroke-width="1" />
<line x1="434.1" y1="598.3" x2="1755.1" y2="222.3" stroke="#4a4a66" stroke-width="1.05" />
<line x1="1755.1" y1="222.3" x2="1852.3" y2="302.9" stroke="#4a4a66" stroke-width="1.05" />
<line x1="1852.3" y1="302.9" x2="531.4" y2="678.7" stroke="#4a4a66" stroke-width="1.05" />
<line x1="531.4" y1="678.7" x2="434.1" y2="598.3" stroke="#4a4a66" stroke-width="1.05" />
<line x1="434.1" y1="598.3" x2="370.8" y2="842.4" stroke="#4a4a66" stroke-width="1.05" />
<line x1="370.8" y1="842.4" x2="468.7" y2="923.5" stroke="#4a4a66" stroke-width="1.05" />
<line x1="468.7" y1="923.5" x2="531.4" y2="678.7" stroke="#4a4a66" stroke-width="1.05" />
<line x1="468.7" y1="923.5" x2="1790.0" y2="546.7" stroke="#4a4a66" stroke-width="1.05" />
<line x1="1790.0" y1="546.7" x2="1852.3" y2="302.9" stroke="#4a4a66" stroke-width="1.05" />
</g>
<g>
<path d="M798.2,820.7 L822.7,840.2" stroke="#8fa6f0" stroke-width="3" fill="none" opacity="0.9"/>
<path d="M838.6,853.5 L820.4,842.9 L825,837.4 Z" fill="#3f7cf3"/>
<path d="M798.2,820.7 L826,812.6" stroke="#f0505e" stroke-width="3" fill="none" opacity="0.85"/>
<path d="M844.9,808 L825,808.6 L827.6,816.8 Z" fill="#ff1010"/>
<path d="M798.6,820.7 L806.8,791" stroke="#3aa43e" stroke-width="3" fill="none" opacity="0.85"/>
<path d="M812.3,770.2 Q805.5,781 802.8,790.4 L812.2,793 Q813.5,781 812.3,770.2 Z" fill="#0a9a0a"/>
<circle cx="798.4" cy="820.6" r="2" fill="#9aa39a"/>
<text x="815" y="763" font-size="12" font-weight="700" fill="#5fb66a" stroke="#5fb66a" stroke-width="0.4" text-anchor="middle">Y</text>
<text x="854.7" y="811" font-size="12" font-weight="700" fill="#ee5a6a" stroke="#ee5a6a" stroke-width="0.4" text-anchor="middle">X</text>
<text x="847" y="865" font-size="13" font-weight="700" fill="#6060d8" stroke="#6060d8" stroke-width="0.4" text-anchor="middle">Z</text>
</g>
<g>
<path d="M402.8,874.1 L415.9,868.4 L437.9,877.8 L421.6,883.5 Z" fill="#dfe8f6" stroke="#c3cde0" stroke-width="0.6"/>
<path d="M402.8,874.1 L421.6,883.5 L415.3,904.2 L399.6,889.7 Z" fill="#eef3fb" stroke="#c3cde0" stroke-width="0.6"/>
<path d="M421.6,883.5 L437.9,877.8 L432.3,896.6 L415.3,904.2 Z" fill="#bcc8df" stroke="#b3bfd8" stroke-width="0.6"/>
<ellipse cx="421" cy="873.3" rx="5" ry="4" fill="#0b8f0b" transform="rotate(10 421 873.3)"/>
<ellipse cx="407.8" cy="887.9" rx="4.2" ry="5" fill="#ff0808" transform="rotate(-10 407.8 887.9)"/>
<ellipse cx="426.6" cy="891.9" rx="4.6" ry="5" fill="#0808ff" transform="rotate(20 426.6 891.9)"/>
<path d="M422.5,866 L424.5,859" stroke="#0b8f0b" stroke-width="2.4" fill="none"/>
<path d="M427.9,846.4 L420.2,858.6 L428.6,861.3 Z" fill="#0b8f0b"/>
<path d="M442.2,879.2 L436.8,876.2 L437.4,882 Z" fill="#ff1010"/>
<path d="M432.3,897.3 L438,901.6" stroke="#3838e8" stroke-width="2.2" fill="none"/>
<path d="M448.3,909.4 L435.6,904.3 L440.3,898.6 Z" fill="#3838e8"/>
<text x="431" y="840.5" font-size="13" font-weight="700" fill="#1e8a1e" stroke="#1e8a1e" stroke-width="0.4" text-anchor="middle">Y</text>
<text x="446.7" y="882" font-size="13" font-weight="700" fill="#ff2020" stroke="#ff2020" stroke-width="0.4" text-anchor="middle">X</text>
<text x="457.3" y="921.5" font-size="13" font-weight="700" fill="#1a1aee" stroke="#1a1aee" stroke-width="0.4" text-anchor="middle">Z</text>
</g>
<g fill="#4d4d4d">
<text x="1887.3" y="234" font-size="29.5" font-weight="700" text-anchor="end" textLength="79" lengthAdjust="spacingAndGlyphs" stroke="#4d4d4d" stroke-width="1.1" stroke-linejoin="round">ANSYS</text>
<text x="1887" y="251.8" font-size="17" text-anchor="end" textLength="60" lengthAdjust="spacingAndGlyphs" fill="#555"><tspan>2020</tspan> <tspan font-weight="700" fill="#474747" stroke="#474747" stroke-width="0.4">R2</tspan></text>
<rect x="1804" y="260" width="83" height="1" fill="#5a5a5a"/>
<text transform="scale(0.66 1)" x="2734.0 2750.0 2767.5 2785.6 2801.7 2817.0 2837.0 2848.5" y="278.2" font-size="13" fill="#505050" stroke="#505050" stroke-width="0.35">ACADEMIC</text>
</g>
</svg>

</body>
</html>
